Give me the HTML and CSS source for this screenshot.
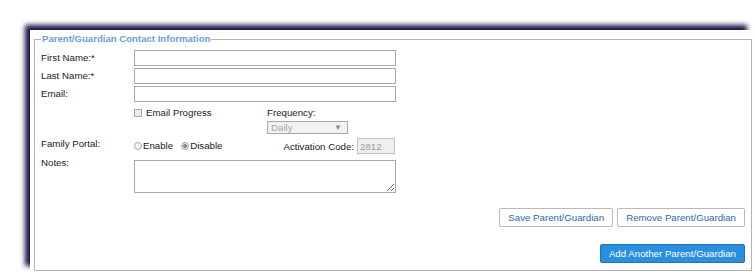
FILE: index.html
```html
<!DOCTYPE html>
<html>
<head>
<meta charset="utf-8">
<link rel="stylesheet" href="styles.css">
</head>
<body>
<div class="panel">
  <fieldset class="box">
    <legend class="title">Parent/Guardian Contact Information</legend>
    <div class="form">
      <label class="lbl">First Name:*</label>
      <input class="txt" type="text">
      <label class="lbl">Last Name:*</label>
      <input class="txt" type="text">
      <label class="lbl">Email:</label>
      <input class="txt" type="text">
      <span></span>
      <div class="opts">
        <label class="chk"><input type="checkbox" class="cb"><span>Email Progress</span></label>
        <div class="freq">
          <span class="freq-lbl">Frequency:</span>
          <div class="sel"><span>Daily</span><span class="arrow">&#9660;</span></div>
        </div>
      </div>
      <label class="lbl lbl-mid">Family Portal:</label>
      <div class="portal">
        <div class="radios">
          <label class="rad"><input type="radio" name="fp" class="rb"><span>Enable</span></label>
          <label class="rad"><input type="radio" name="fp" class="rb" checked><span>Disable</span></label>
        </div>
        <div class="act">
          <span>Activation Code:</span>
          <input class="code" type="text" value="2812" disabled>
        </div>
      </div>
      <label class="lbl lbl-top">Notes:</label>
      <textarea class="notes"></textarea>
    </div>
    <div class="btns">
      <div class="btn-row">
        <button class="btn">Save Parent/Guardian</button>
        <button class="btn">Remove Parent/Guardian</button>
      </div>
      <div class="btn-row">
        <button class="btn btn-primary">Add Another Parent/Guardian</button>
      </div>
    </div>
  </fieldset>
</div>
</body>
</html>
```

FILE: styles.css
```css
html, body {
  margin: 0;
  padding: 0;
  background: #fff;
}
body {
  font-family: "Liberation Sans", Arial, sans-serif;
  font-size: 9.7px;
  color: #1a1a1a;
}
.panel {
  margin: 30px 0 0 30px;
  width: 718px;
  height: 238px;
  padding: 3px 0 0 4px;
  background: #fff;
  box-shadow: -5px -5px 5px #1a1445;
}
.box {
  margin: 0;
  border: 1px solid #b4b4b4;
  padding: 5px 6px 7px 6px;
  height: 238px;
  box-sizing: border-box;
  min-width: 0;
}
.title {
  padding: 0 1px;
  font-weight: bold;
  font-size: 9.6px;
  line-height: 12px;
  color: #6a9fd7;
}
.form {
  display: grid;
  grid-template-columns: 93px 262px;
  row-gap: 2px;
  align-items: center;
}
.lbl {
  line-height: 12px;
}
.lbl-top {
  align-self: start;
  padding-top: 1px;
}
.txt {
  box-sizing: border-box;
  width: 262px;
  height: 16px;
  margin: 0;
  padding: 0 3px;
  border: 1px solid #a9a9a9;
  font: inherit;
}
.opts {
  display: flex;
  margin-top: 3px;
}
.chk {
  width: 133px;
  display: flex;
  align-items: flex-start;
  line-height: 12px;
}
.cb {
  appearance: none;
  -webkit-appearance: none;
  box-sizing: border-box;
  width: 8px;
  height: 8px;
  margin: 2px 4px 0 0;
  border: 1px solid #a6a6a6;
  background: #ededed;
}
.freq {
  display: flex;
  flex-direction: column;
  gap: 2px;
}
.freq-lbl {
  line-height: 12px;
}
.sel {
  position: relative;
  box-sizing: border-box;
  width: 81px;
  height: 13px;
  border: 1px solid #a9a9a9;
  background: #f2f2f2;
  color: #a8a8a8;
  display: flex;
  align-items: center;
  justify-content: space-between;
  padding: 0 5px 0 3px;
  line-height: 11px;
}
.arrow {
  font-size: 8px;
  color: #8c8c8c;
}
.portal {
  display: flex;
  align-items: center;
  justify-content: space-between;
  margin-top: 2px;
  margin-right: 1px;
}
.lbl-mid {
  margin-top: 0;
  margin-bottom: 2px;
  align-self: center;
}
.radios {
  display: flex;
  gap: 8px;
  margin-bottom: 1px;
}
.rad {
  display: flex;
  align-items: center;
  line-height: 12px;
}
.rb {
  appearance: none;
  -webkit-appearance: none;
  box-sizing: border-box;
  width: 8px;
  height: 8px;
  margin: 0 1px 0 0;
  border: 1px solid #a6a6a6;
  border-radius: 50%;
  background: #f4f4f4;
}
.rb:checked {
  background: radial-gradient(circle, #8a8a8a 0 1.8px, #e8e8e8 2.2px);
}
.act {
  display: flex;
  align-items: center;
  gap: 3px;
}
.code {
  box-sizing: border-box;
  width: 38px;
  height: 16px;
  margin: 0;
  padding: 0 2px;
  border: 1px solid #c4c4c4;
  background: #efefef;
  color: #9c9c9c;
  font: inherit;
}
.notes {
  box-sizing: border-box;
  width: 262px;
  height: 33px;
  margin: 4px 0 0 0;
  border: 1px solid #a9a9a9;
  font: inherit;
  resize: both;
}
.btns {
  display: flex;
  flex-direction: column;
  align-items: flex-end;
  gap: 17px;
  margin-top: 15px;
}
.btn-row {
  display: flex;
  gap: 4px;
}
.btn {
  box-sizing: border-box;
  height: 19px;
  margin: 0;
  padding: 0 8px;
  border: 1px solid #b9b9b9;
  border-radius: 2px;
  background: #fff;
  color: #2f67a6;
  font: inherit;
  line-height: 17px;
}
.btn-primary {
  padding: 0 8px;
  background: #2b8fe0;
  border-color: #1f72be;
  color: #fff;
}
```
